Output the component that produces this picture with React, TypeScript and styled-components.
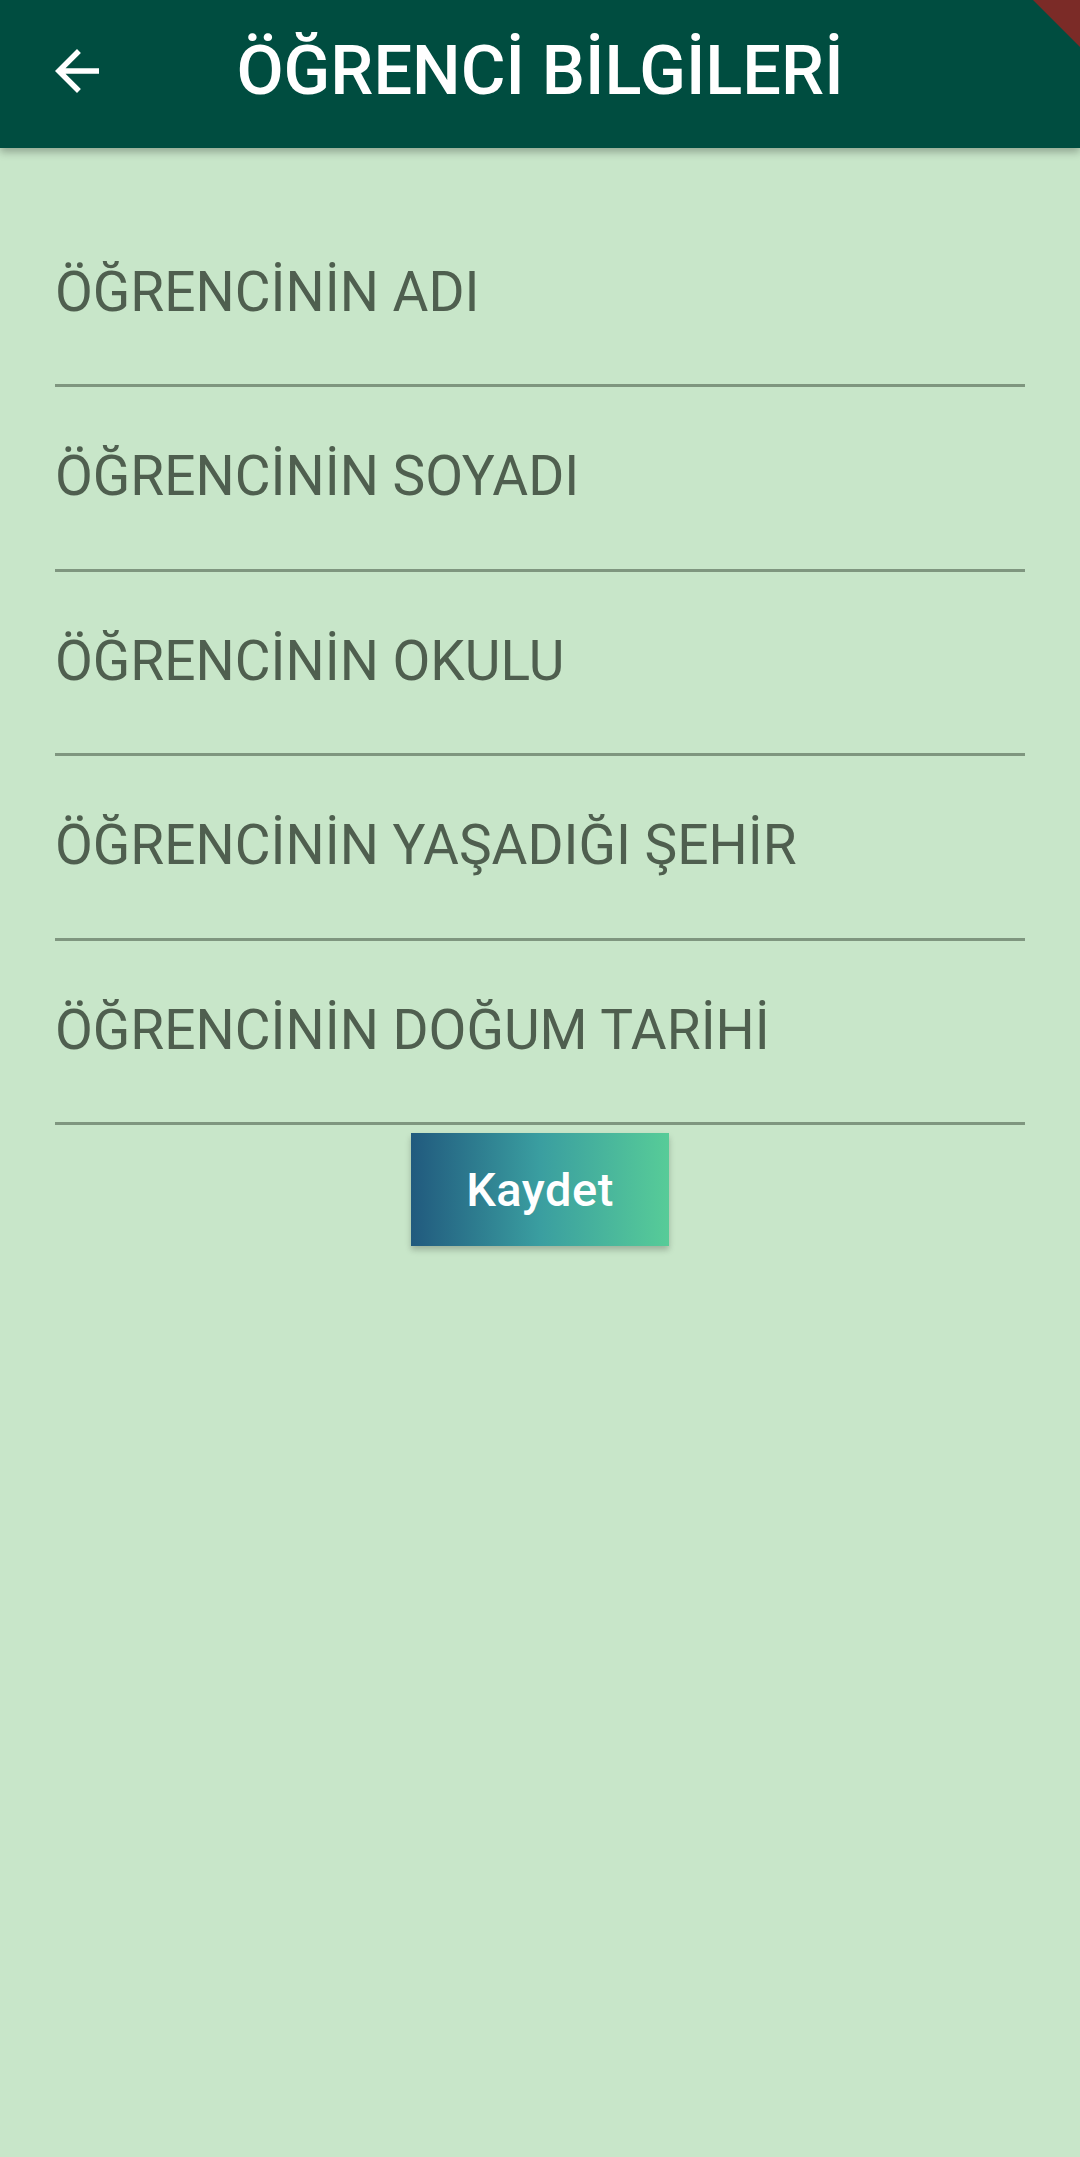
import React from 'react';
import { createGlobalStyle, styled } from 'styled-components';

const GlobalStyle = createGlobalStyle`
  html, body {
    margin: 0;
    padding: 0;
    background: #c8e6c9;
  }
  body {
    font-family: Roboto, "Noto Sans", "Liberation Sans", sans-serif;
    min-height: 2157px;
  }
`;

const Page = styled.div`
  position: relative;
  min-height: 2157px;
  background: #c8e6c9;
  overflow: hidden;
`;

const AppBar = styled.header`
  position: relative;
  z-index: 2;
  display: grid;
  grid-template-columns: 154px 1fr 154px;
  align-items: center;
  height: 148px;
  box-sizing: border-box;
  padding-bottom: 6px;
  background: #004d40;
  box-shadow: 0 4px 8px rgba(0, 0, 0, 0.28);
`;

const BackButton = styled.button`
  display: flex;
  align-items: center;
  justify-content: center;
  width: 66px;
  height: 66px;
  margin-left: 44px;
  padding: 0;
  border: none;
  background: transparent;
  color: #ffffff;
  cursor: pointer;
`;

const Title = styled.h1`
  margin: 0;
  text-align: center;
  font-size: 68.5px;
  font-weight: 500;
  line-height: 80px;
  color: #ffffff;
  white-space: nowrap;
`;

const DebugCorner = styled.div`
  position: absolute;
  top: 0;
  right: 0;
  z-index: 3;
  width: 47px;
  height: 47px;
  background: #7b2b27;
  clip-path: polygon(0 0, 100% 0, 100% 100%);
`;

const Form = styled.form`
  display: flex;
  flex-direction: column;
  align-items: stretch;
  padding: 55px 55px 0;
`;

const Field = styled.label`
  display: block;
  padding: 57px 0 60.4px;
  border-bottom: 3px solid #7f967f;
`;

const Input = styled.input`
  display: block;
  width: 100%;
  height: 64px;
  margin: 0;
  padding: 0;
  border: none;
  outline: none;
  background: transparent;
  font-family: Roboto, "Noto Sans", "Liberation Sans", sans-serif;
  font-size: 55px;
  font-weight: 400;
  color: #4f5f4f;

  &::placeholder {
    color: #4f5f4f;
    opacity: 1;
  }
`;

const SaveButton = styled.button`
  align-self: center;
  width: 258px;
  height: 113px;
  margin-top: 8px;
  border: none;
  border-radius: 0;
  background: linear-gradient(to right, #215a7e 0%, #3a9ea0 50%, #57cc98 100%);
  box-shadow: 0 4px 6px rgba(0, 0, 0, 0.22);
  font-family: Roboto, "Noto Sans", "Liberation Sans", sans-serif;
  font-size: 47px;
  font-weight: 500;
  letter-spacing: 0.5px;
  color: #ffffff;
  cursor: pointer;
`;

const fields = [
  'ÖĞRENCİNİN ADI',
  'ÖĞRENCİNİN SOYADI',
  'ÖĞRENCİNİN OKULU',
  'ÖĞRENCİNİN YAŞADIĞI ŞEHİR',
  'ÖĞRENCİNİN DOĞUM TARİHİ',
];

const BackArrow = () => (
  <svg width="66" height="66" viewBox="0 0 24 24" fill="currentColor" aria-hidden="true">
    <path d="M20 11H7.83l5.59-5.59L12 4l-8 8 8 8 1.41-1.41L7.83 13H20v-2z" />
  </svg>
);

export default function App() {
  return (
    <Page>
      <GlobalStyle />
      <AppBar>
        <BackButton type="button" aria-label="Geri">
          <BackArrow />
        </BackButton>
        <Title>ÖĞRENCİ BİLGİLERİ</Title>
        <span />
      </AppBar>
      <DebugCorner />
      <Form onSubmit={(e) => e.preventDefault()}>
        {fields.map((f) => (
          <Field key={f}>
            <Input type="text" placeholder={f} />
          </Field>
        ))}
        <SaveButton type="submit">Kaydet</SaveButton>
      </Form>
    </Page>
  );
}
